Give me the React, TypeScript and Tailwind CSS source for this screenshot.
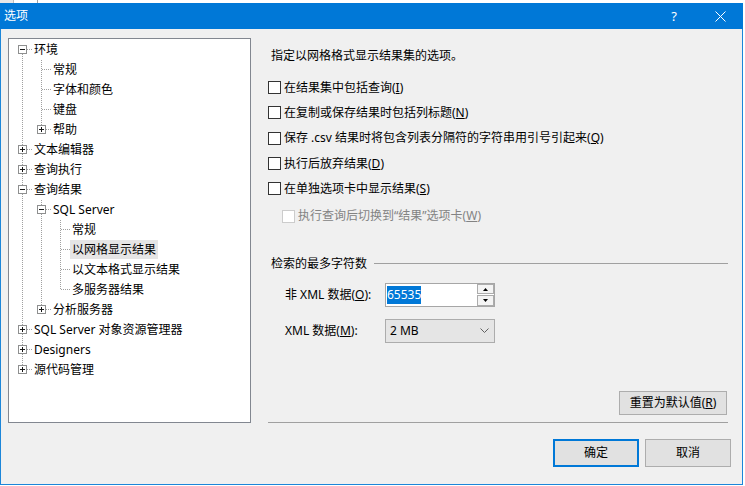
import React from 'react';

type Node = {
  label: React.ReactNode;
  level: number;
  expander?: 'plus' | 'minus';
  // for each ancestor level (0..level-1): does a vertical line continue through this row
  rails: boolean[];
  first?: boolean;
  last?: boolean;
  selected?: boolean;
};

// Tree rows, flattened. rails = ancestor columns that keep their dotted line.
const TREE: Node[] = [
  { label: '环境', level: 0, expander: 'minus', rails: [], first: true },
  { label: '常规', level: 1, rails: [true] },
  { label: '字体和颜色', level: 1, rails: [true] },
  { label: '键盘', level: 1, rails: [true] },
  { label: '帮助', level: 1, expander: 'plus', rails: [true], last: true },
  { label: '文本编辑器', level: 0, expander: 'plus', rails: [] },
  { label: '查询执行', level: 0, expander: 'plus', rails: [] },
  { label: '查询结果', level: 0, expander: 'minus', rails: [] },
  { label: 'SQL Server', level: 1, expander: 'minus', rails: [true] },
  { label: '常规', level: 2, rails: [true, true] },
  { label: '以网格显示结果', level: 2, rails: [true, true], selected: true },
  { label: '以文本格式显示结果', level: 2, rails: [true, true] },
  { label: '多服务器结果', level: 2, rails: [true, true], last: true },
  { label: '分析服务器', level: 1, expander: 'plus', rails: [true], last: true },
  { label: 'SQL Server 对象资源管理器', level: 0, expander: 'plus', rails: [] },
  { label: 'Designers', level: 0, expander: 'plus', rails: [] },
  { label: '源代码管理', level: 0, expander: 'plus', rails: [], last: true },
];

const DOT = '#a0a0a0';

function Rail({ on }: { on: boolean }) {
  return (
    <svg width="19" height="20" className="shrink-0" shapeRendering="crispEdges">
      {on && <line x1="9.5" y1="1" x2="9.5" y2="20" stroke={DOT} strokeDasharray="1 1" />}
    </svg>
  );
}

function Connector({ node }: { node: Node }) {
  return (
    <svg width="19" height="20" className="shrink-0" shapeRendering="crispEdges">
      {!node.first && <line x1="9.5" y1="1" x2="9.5" y2="10" stroke={DOT} strokeDasharray="1 1" />}
      {!node.last && <line x1="9.5" y1="11" x2="9.5" y2="20" stroke={DOT} strokeDasharray="1 1" />}
      <line x1="10" y1="10.5" x2="19" y2="10.5" stroke={DOT} strokeDasharray="1 1" />
      {node.expander && (
        <>
          <rect x="5.5" y="6.5" width="8" height="8" fill="#fff" stroke="#8e8f8f" />
          <line x1="7" y1="10.5" x2="12" y2="10.5" stroke="#1a1a1a" />
          {node.expander === 'plus' && <line x1="9.5" y1="8" x2="9.5" y2="13" stroke="#1a1a1a" />}
        </>
      )}
    </svg>
  );
}

function TreeRow({ node }: { node: Node }) {
  return (
    <div className="flex items-center h-5">
      {node.rails.map((on, i) => (
        <Rail key={i} on={on} />
      ))}
      <Connector node={node} />
      <span
        className={`px-[2px] h-[19px] leading-[19px] whitespace-nowrap ${node.selected ? 'bg-[#e5e5e5]' : ''}`}
      >
        {node.label}
      </span>
    </div>
  );
}

function Check({ children, disabled }: { children: React.ReactNode; disabled?: boolean }) {
  return (
    <div className={`flex items-center h-[25.3px] ${disabled ? 'pl-[14px] text-[#838383]' : ''}`}>
      <div
        className={`w-[13px] h-[13px] border bg-white shrink-0 ${disabled ? 'border-[#cccccc]' : 'border-[#333333]'}`}
      />
      <span className="ml-[3px] whitespace-nowrap">{children}</span>
    </div>
  );
}

export default function App() {
  return (
    <div className="w-[745px] h-[486px] bg-white overflow-hidden text-[12px] leading-4 text-black font-['Noto_Sans','Noto_Sans_CJK_SC',sans-serif]">
      {/* bit of the window behind */}
      <div className="h-[3px] flex">
        <div className="w-[14px] bg-[#e8e8e8] border-r border-[#bdbdbd]" />
        <div className="w-[23px]" />
        <div className="w-px bg-[#a0a0a0]" />
      </div>

      <div className="w-[743px] flex flex-col">
        {/* Title bar */}
        <div className="h-[26px] bg-[#0078d7] flex items-center text-white">
          <span className="pl-[4px] flex-1">选项</span>
          <div className="w-[46px] h-full flex items-center justify-center text-[13px]">?</div>
          <div className="w-[46px] h-full flex items-center justify-center">
            <svg width="11" height="11" viewBox="0 0 11 11">
              <path d="M0.5 0.5 L10.5 10.5 M10.5 0.5 L0.5 10.5" stroke="#fff" strokeWidth="1" />
            </svg>
          </div>
        </div>

        {/* Body */}
        <div className="h-[456px] bg-[#f0f0f0] border-x border-b border-[#1c86d9] pt-[9px] pl-[7px] flex flex-col">
          <div className="flex">
            {/* Tree */}
            <div className="w-[243px] h-[385px] border border-[#828790] bg-white pl-[4px] overflow-hidden">
              {TREE.map((n, i) => (
                <TreeRow key={i} node={n} />
              ))}
            </div>

            {/* Options page */}
            <div className="ml-[17px] w-[460px] h-[385px] flex flex-col">
              <div className="mt-[10px] h-4 pl-[3px]">指定以网格格式显示结果集的选项。</div>

              <div className="mt-[11px] flex flex-col">
                <Check>在结果集中包括查询(<u>I</u>)</Check>
                <Check>在复制或保存结果时包括列标题(<u>N</u>)</Check>
                <Check>保存 .csv 结果时将包含列表分隔符的字符串用引号引起来(<u>Q</u>)</Check>
                <Check>执行后放弃结果(<u>D</u>)</Check>
                <Check>在单独选项卡中显示结果(<u>S</u>)</Check>
              </div>
              <div className="mt-[2px]">
                <Check disabled>执行查询后切换到“结果”选项卡(<u>W</u>)</Check>
              </div>

              {/* Group */}
              <div className="mt-[27px] h-4 flex items-center pl-[3px]">
                <span>检索的最多字符数</span>
                <div className="flex-1 h-px bg-[#a0a0a0] ml-[7px]" />
              </div>

              <div className="mt-[11px] h-6 flex items-center pl-[17px]">
                <span className="w-[100px]">
                  非 XML 数据(<u>O</u>):
                </span>
                <div className="w-[110px] h-6 border border-[#a6a6a6] bg-white flex items-center">
                  <span className="ml-[1px] h-[18px] leading-[18px] bg-[#0078d7] text-white">65535</span>
                  <div className="ml-auto h-full w-[17px] flex flex-col gap-px">
                    <div className="flex-1 border border-[#acacac] bg-[#f4f4f4] flex items-center justify-center">
                      <svg width="5" height="3" viewBox="0 0 5 3">
                        <path d="M2.5 0 L5 3 L0 3 Z" fill="#000" />
                      </svg>
                    </div>
                    <div className="flex-1 border border-[#acacac] bg-[#f4f4f4] flex items-center justify-center">
                      <svg width="5" height="3" viewBox="0 0 5 3">
                        <path d="M0 0 L5 0 L2.5 3 Z" fill="#000" />
                      </svg>
                    </div>
                  </div>
                </div>
              </div>

              <div className="mt-[12px] h-6 flex items-center pl-[17px]">
                <span className="w-[100px]">
                  XML 数据(<u>M</u>):
                </span>
                <div className="w-[110px] h-6 border border-[#acacac] bg-[#e5e5e5] flex items-center pl-[4px] pr-[5px]">
                  <span className="flex-1">2 MB</span>
                  <svg width="9" height="5" viewBox="0 0 9 5">
                    <path d="M0.5 0.5 L4.5 4.5 L8.5 0.5" stroke="#606060" fill="none" />
                  </svg>
                </div>
              </div>

              <div className="flex-1" />

              <button className="self-end mr-[1px] w-[108px] h-6 border border-[#adadad] bg-[#e1e1e1] flex items-center justify-center">
                重置为默认值(<u>R</u>)
              </button>
              <div className="mt-[7px] h-px bg-[#a0a0a0]" />
            </div>
          </div>

          {/* Dialog buttons */}
          <div className="mt-4 flex justify-end gap-[6px] pr-[11px]">
            <button className="w-[86px] h-7 border-2 border-[#0078d7] bg-[#e1e1e1] flex items-center justify-center">
              确定
            </button>
            <button className="w-[86px] h-7 border border-[#adadad] bg-[#e1e1e1] flex items-center justify-center">
              取消
            </button>
          </div>
        </div>
      </div>
    </div>
  );
}
